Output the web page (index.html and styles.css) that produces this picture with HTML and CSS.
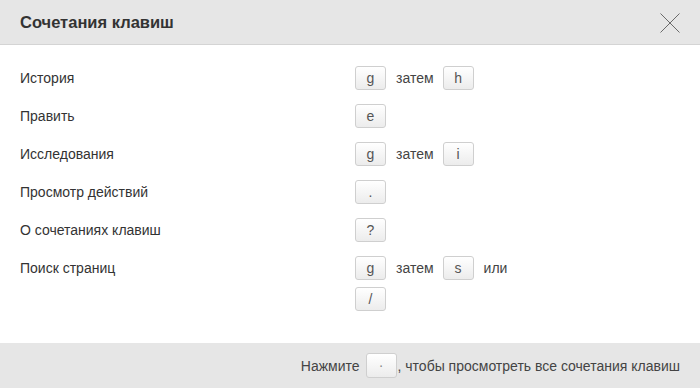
FILE: index.html
```html
<!DOCTYPE html>
<html lang="ru">
<head>
<meta charset="utf-8">
<title>Сочетания клавиш</title>
<link rel="stylesheet" href="styles.css">
</head>
<body>
<div class="dialog">
  <div class="header">
    <h1 class="title">Сочетания клавиш</h1>
    <svg class="close" width="20" height="20" viewBox="0 0 20 20">
      <path d="M0.5 0.5 L19.5 19.5 M19.5 0.5 L0.5 19.5" stroke="#6a6a6a" stroke-width="1" fill="none"/>
    </svg>
  </div>

  <div class="content">
    <div class="row">
      <div class="label">История</div>
      <div class="keys"><span class="key">g</span><span class="word">затем</span><span class="key">h</span></div>
    </div>
    <div class="row">
      <div class="label">Править</div>
      <div class="keys"><span class="key">e</span></div>
    </div>
    <div class="row">
      <div class="label">Исследования</div>
      <div class="keys"><span class="key">g</span><span class="word">затем</span><span class="key">i</span></div>
    </div>
    <div class="row">
      <div class="label">Просмотр действий</div>
      <div class="keys"><span class="key">.</span></div>
    </div>
    <div class="row">
      <div class="label">О сочетаниях клавиш</div>
      <div class="keys"><span class="key">?</span></div>
    </div>
    <div class="row multi">
      <div class="label">Поиск страниц</div>
      <div class="keylines">
        <div class="keys"><span class="key">g</span><span class="word">затем</span><span class="key">s</span><span class="word">или</span></div>
        <div class="keys"><span class="key">/</span></div>
      </div>
    </div>
  </div>

  <div class="footer">
    <span>Нажмите</span><span class="key small">·</span><span>, чтобы просмотреть все сочетания клавиш</span>
  </div>
</div>
</body>
</html>
```

FILE: styles.css
```css
body {
  margin: 0;
  font-family: "Liberation Sans", Arial, Helvetica, sans-serif;
  background: #fff;
  color: #333;
}
.dialog {
  width: 700px;
  height: 388px;
  display: flex;
  flex-direction: column;
}
.header {
  height: 44px;
  background-color: #e6e6e6;
  border-bottom: 1px solid #d4d4d4;
  display: flex;
  align-items: center;
  justify-content: space-between;
  padding: 0 20px;
}
.title {
  margin: 0;
  font-size: 16.5px;
  font-weight: bold;
  color: #333;
}
.close {
  display: block;
  margin-top: 1px;
}
.content {
  flex: 1;
  padding: 21px 20px 0 20px;
}
.row {
  display: flex;
  align-items: center;
  margin-bottom: 14px;
  font-size: 14px;
}
.row.multi {
  align-items: flex-start;
}
.row.multi .label {
  line-height: 24px;
}
.label {
  width: 335px;
}
.keylines {
  display: flex;
  flex-direction: column;
  gap: 7px;
}
.keys {
  display: flex;
  align-items: center;
}
.key {
  display: inline-block;
  box-sizing: border-box;
  width: 31px;
  height: 24px;
  line-height: 22px;
  text-align: center;
  border: 1px solid #cfcfcf;
  border-radius: 3px;
  background: linear-gradient(#ffffff, #ececec);
  color: #555;
  font-size: 14px;
}
.word {
  margin: 0 9px 0 10px;
  color: #444;
}
.footer {
  height: 45px;
  background-color: #e6e6e6;
  display: flex;
  align-items: center;
  justify-content: flex-end;
  padding: 0 20px;
  font-size: 14px;
  color: #444;
}
.key.small {
  height: 25px;
  margin: 0 1px 0 6px;
  color: #888;
  line-height: 23px;
}
```
